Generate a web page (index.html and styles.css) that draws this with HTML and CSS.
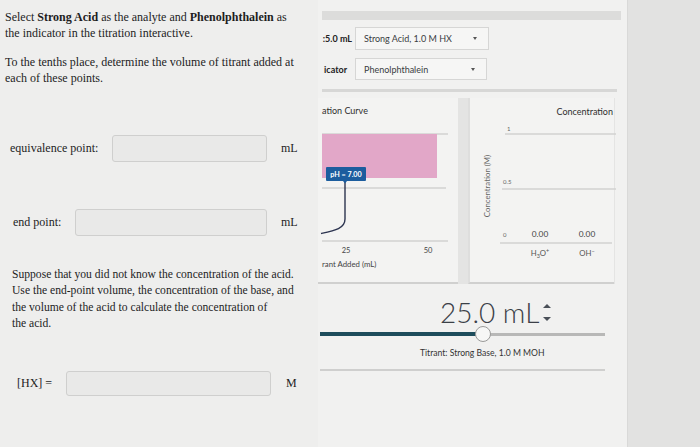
FILE: index.html
```html
<!DOCTYPE html>
<html>
<head>
<meta charset="utf-8">
<title>Titration</title>
<link rel="stylesheet" href="styles.css">
</head>
<body>
<div class="page">
  <section class="question">
    <p class="q-text">Select <b>Strong Acid</b> as the analyte and <b>Phenolphthalein</b> as<br>the indicator in the titration interactive.</p>
    <p class="q-text intro2">To the tenths place, determine the volume of titrant added at<br>each of these points.</p>
    <div class="answer eq"><span class="lbl">equivalence point:</span><span class="box"></span><span class="unit">mL</span></div>
    <div class="answer end"><span class="lbl">end point:</span><span class="box"></span><span class="unit">mL</span></div>
    <p class="q-text suppose">Suppose that you did not know the concentration of the acid.<br>Use the end-point volume, the concentration of the base, and<br>the volume of the acid to calculate the concentration of<br>the acid.</p>
    <div class="answer hx"><span class="lbl">[HX] =</span><span class="box"></span><span class="unit">M</span></div>
  </section>

  <section class="sim">
    <div class="sim-bar"></div>
    <div class="ctrl">
      <span class="ctrl-lbl">:5.0 mL</span>
      <div class="select">Strong Acid, 1.0 M HX<span class="caret"></span></div>
    </div>
    <div class="ctrl ctrl2">
      <span class="ctrl-lbl lbl2">icator</span>
      <div class="select sel2">Phenolphthalein<span class="caret"></span></div>
    </div>
    <div class="sim-rule"></div>

    <div class="charts">
      <div class="chart curve">
        <div class="ctitle">ation Curve</div>
        <svg class="plot" width="140" height="124" viewBox="0 0 140 124">
          <line x1="4" y1="12" x2="130" y2="12" stroke="#d2d2d1" stroke-width="1.5"/>
          <rect x="4" y="12" width="115" height="44" fill="#e2a7c8"/>
          <line x1="4" y1="66" x2="128" y2="66" stroke="#d2d2d1" stroke-width="1.5"/>
          <line x1="4" y1="119" x2="130" y2="119" stroke="#d2d2d1" stroke-width="1.5"/>
          <path d="M3 111.5 C 17 108.5, 27 106.5, 27 97 L 27 59" fill="none" stroke="#2c3450" stroke-width="1.4"/>
          <rect x="8" y="45" width="40" height="14" rx="1" fill="#1c5d9e"/>
          <path d="M25 59 L27 61.5 L29 59 Z" fill="#1c5d9e"/>
          <text x="28" y="54.8" text-anchor="middle" class="ph">pH = 7.00</text>
        </svg>
        <div class="xticks"><span>25</span><span>50</span></div>
        <div class="xlabel">rant Added (mL)</div>
      </div>
      <div class="chart conc">
        <div class="ctitle right">Concentration</div>
        <svg class="plot" width="146" height="140" viewBox="0 0 146 140">
          <text x="17" y="64" transform="rotate(-90 17 64)" text-anchor="middle" dominant-baseline="central" class="ylab">Concentration (M)</text>
          <text x="37" y="9" class="tick">1</text>
          <line x1="35" y1="12" x2="148" y2="12" stroke="#d2d2d1" stroke-width="1.5"/>
          <text x="33" y="62" class="tick">0.5</text>
          <line x1="32" y1="67" x2="146" y2="67" stroke="#d2d2d1" stroke-width="1.5"/>
          <text x="33" y="115" class="tick">0</text>
          <text x="70" y="115" text-anchor="middle" class="val">0.00</text>
          <text x="117" y="115" text-anchor="middle" class="val">0.00</text>
          <line x1="30" y1="121" x2="142" y2="121" stroke="#d2d2d1" stroke-width="1.5"/>
          <text x="70" y="134" text-anchor="middle" class="ion">H<tspan class="sub" dy="2">3</tspan><tspan dy="-2">O</tspan><tspan class="sub" dy="-3">+</tspan></text>
          <text x="117" y="134" text-anchor="middle" class="ion">OH<tspan class="sub" dy="-3">−</tspan></text>
        </svg>
      </div>
    </div>

    <div class="vol">
      <span class="vol-val">25.0 mL</span>
      <span class="spin"><span class="up"></span><span class="down"></span></span>
    </div>
    <div class="slider">
      <div class="track"><div class="fill"></div></div>
      <div class="thumb"></div>
    </div>
    <div class="titrant">Titrant: Strong Base, 1.0 M MOH</div>
    <div class="sim-line"></div>
  </section>

  <div class="outside"></div>
</div>
</body>
</html>
```

FILE: styles.css
```css
* { box-sizing: border-box; }
html, body { margin: 0; padding: 0; }
body {
  width: 700px;
  height: 447px;
  overflow: hidden;
  background: #e2e2e1;
}
.page { display: flex; height: 447px; }

/* ---------- question column ---------- */
.question {
  width: 318px;
  flex: none;
  background: #eeeeed;
  padding: 9px 0 0 5px;
  font-family: "Liberation Serif", "Times New Roman", serif;
  font-size: 12px;
  color: #1d1d1d;
}
.q-text { margin: 0; line-height: 16px; }
.intro2 { margin-top: 13px; }
.suppose { margin-top: 31px; padding-left: 7px; line-height: 16.3px; font-size: 11.6px; }

.answer {
  display: flex;
  align-items: center;
  gap: 14px;
  width: 293px;
}
.answer .box {
  flex: 1;
  height: 27px;
  background: #e9e9e8;
  border: 1px solid #cfcfce;
  border-radius: 3px;
}
.answer .unit { width: 17px; flex: none; }
.eq { margin-top: 49px; padding-left: 5px; }
.end { margin-top: 47px; padding-left: 8px; }
.hx { margin-top: 39px; padding-left: 12px; }
.hx .box { height: 25px; }
.hx .unit { width: 12px; margin-left: 1px; }

/* ---------- simulation ---------- */
.sim {
  width: 310px;
  flex: none;
  background: #f1f1f0;
  border-right: 1px solid #d9d9d8;
  font-family: Lato, "Open Sans", sans-serif;
  color: #333;
}
.sim-bar { height: 9px; margin: 11px 6px 0 4px; background: #dcdcdb; }

.ctrl { display: flex; align-items: center; gap: 3px; margin-top: 7px; padding-left: 2px; }
.ctrl2 { margin-top: 8px; }
.ctrl-lbl {
  width: 32px;
  flex: none;
  text-align: right;
  white-space: nowrap;
  font-weight: 700;
  font-size: 9px;
  color: #222;
}
.lbl2 { padding-right: 5px; }
.select {
  width: 134px;
  height: 23px;
  border: 1px solid #d6d6d5;
  background: #f6f6f5;
  display: flex;
  align-items: center;
  padding: 0 8px;
  font-size: 9px;
  color: #3a3d42;
}
.sel2 { width: 132px; height: 22px; }
.caret {
  margin-left: auto;
  margin-right: 3px;
  width: 0; height: 0;
  border-left: 2.5px solid transparent;
  border-right: 2.5px solid transparent;
  border-top: 3px solid #555;
}
.sim-rule { height: 3px; margin: 9px 10px 0 4px; background: #d7d7d6; }

.charts {
  display: flex;
  gap: 10px;
  margin: 6px 12px 0 0;
  height: 186px;
  background: #e4e4e3;
}
.chart {
  background: #f3f3f2;
  border-bottom: 2px solid #d0d0cf;
  flex: none;
  display: flex;
  flex-direction: column;
}
.curve { width: 140px; }
.conc { width: 146px; border-left: 2px solid #dededd; }
.ctitle { font-size: 9px; line-height: 14px; padding-top: 6px; height: 24px; color: #2e2e2e; white-space: nowrap; }
.curve .ctitle { padding-left: 4px; }
.ctitle.right { text-align: right; padding-right: 1px; padding-top: 7px; }
.plot { display: block; }
.ph { font-family: Lato, sans-serif; font-size: 7.2px; font-weight: 700; fill: #fff; }
.xticks { display: flex; gap: 70px; padding-left: 22px; font-size: 7.5px; line-height: 10px; color: #444; }
.xticks span { width: 12px; text-align: center; }
.xlabel { padding-left: 4px; font-size: 7.8px; line-height: 12px; margin-top: 2px; color: #444; white-space: nowrap; }

.ylab { font-family: Lato, sans-serif; font-size: 7.8px; fill: #666; }
.tick { font-family: Lato, sans-serif; font-size: 6px; fill: #666; }
.val { font-family: Lato, sans-serif; font-size: 8.3px; fill: #444; }
.ion { font-family: Lato, sans-serif; font-size: 7.8px; fill: #555; }
.sub { font-size: 5.5px; }

.vol { display: flex; align-items: center; height: 28px; margin-top: 14px; padding-left: 122px; }
.vol-val { font-size: 28px; font-weight: 300; color: #3b4047; line-height: 28px; }
.spin { display: flex; flex-direction: column; gap: 9px; margin-left: 4px; }
.spin .up, .spin .down { width: 0; height: 0; border-left: 4.5px solid transparent; border-right: 4.5px solid transparent; }
.spin .up { border-bottom: 4px solid #4a5058; }
.spin .down { border-top: 4px solid #4a5058; }

.slider { position: relative; width: 285px; height: 16px; margin-left: 2px; display: flex; align-items: center; }
.track { width: 100%; height: 3px; background: #b8b8b7; }
.fill { width: 163px; height: 4px; margin-top: -0.5px; background: #1e4d5c; }
.thumb {
  position: absolute;
  left: 155px;
  top: 0;
  width: 16px;
  height: 16px;
  border-radius: 50%;
  background: #f7f7f6;
  border: 1.5px solid #9a9a99;
}
.titrant { margin-top: 5px; padding-left: 102px; font-size: 8.6px; line-height: 12px; color: #333; }
.sim-line { height: 2px; width: 285px; margin: 10px 0 0 2px; background: #cfcfce; }

.outside { flex: 1; background: #e2e2e1; }
```
